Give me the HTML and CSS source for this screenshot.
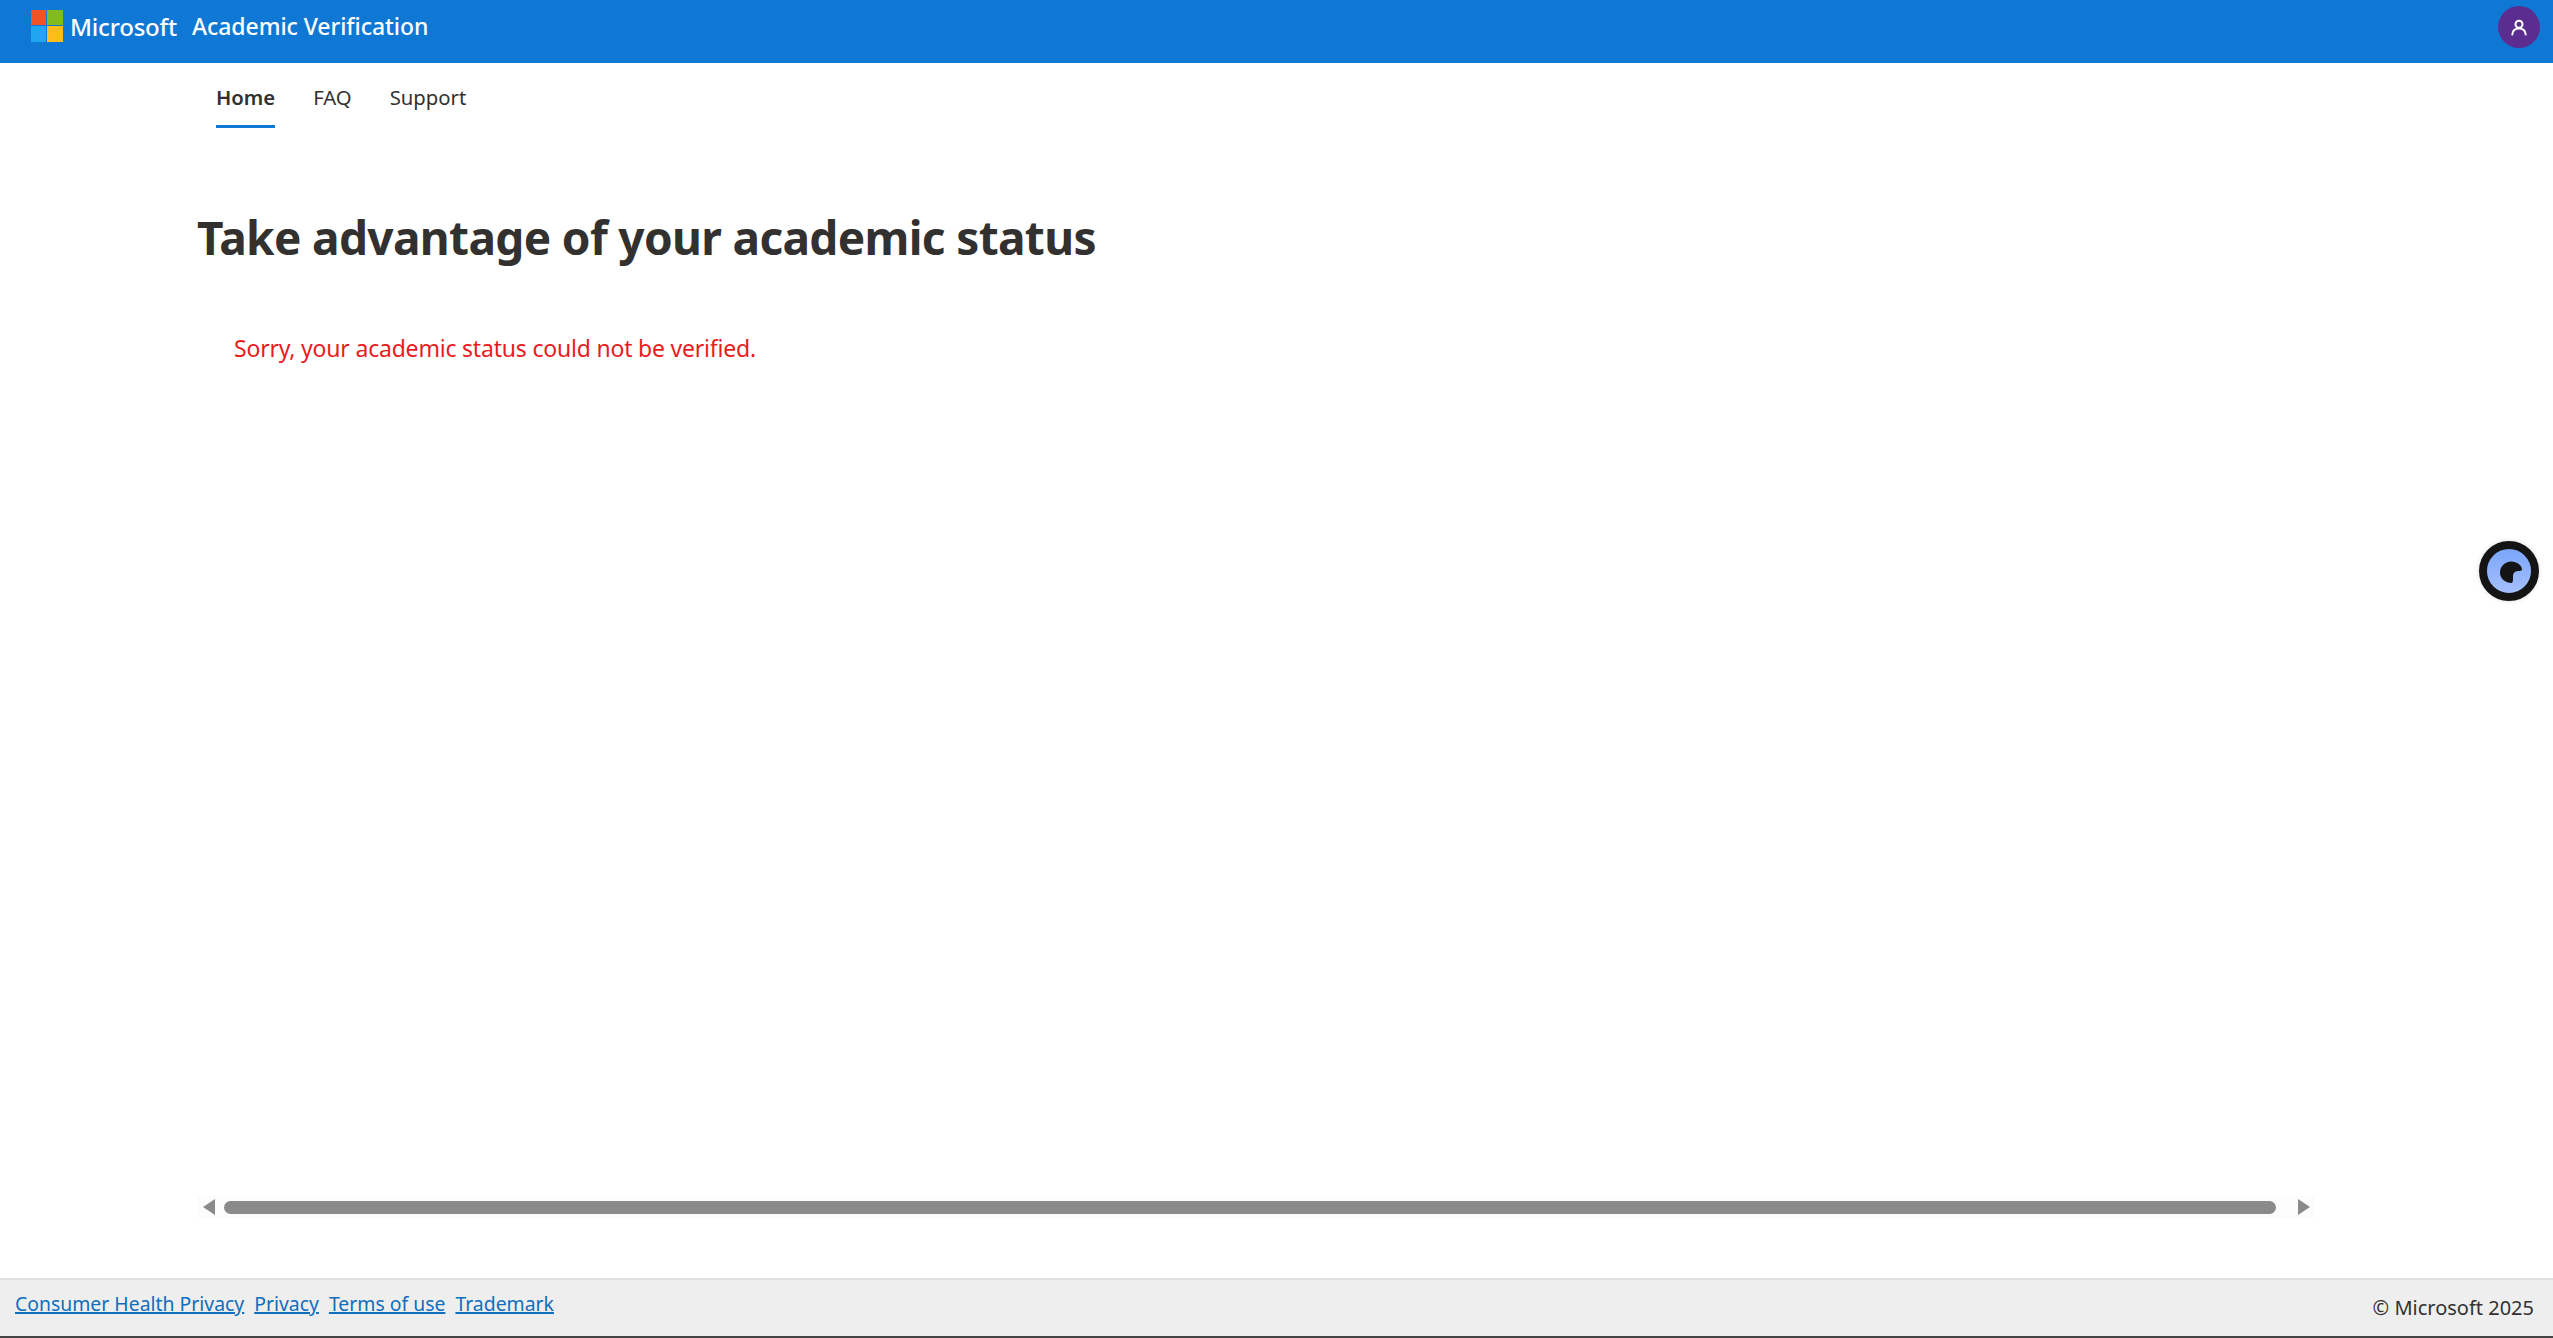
FILE: index.html
```html
<!DOCTYPE html>
<html lang="en-US">
  <head>
    <meta charset="UTF-8" />
    <title>Academic Verification</title>
    <link rel="stylesheet" href="styles.css">
  </head>
  <body>
    <header class="topbar">
      <svg class="ms-logo" viewBox="0 0 32 32" width="32" height="32">
        <rect x="0" y="0" width="15" height="15" fill="#f25325" />
        <rect x="16" y="0" width="16" height="15" fill="#81bb1e" />
        <rect x="0" y="16" width="15" height="16" fill="#20a5f0" />
        <rect x="16" y="16" width="16" height="16" fill="#ffba1c" />
      </svg>
      <span class="brand">Microsoft</span>
      <span class="app-name">Academic Verification</span>
      <span class="avatar">
        <svg viewBox="0 0 16 16" width="16" height="17" fill="none" stroke="#fff" stroke-width="2">
          <circle cx="8" cy="4.800" r="3.500" />
          <path d="M1.300 15c.3-3.600 2.900-6 6.700-6s6.400 2.400 6.700 6" stroke-linecap="round" />
        </svg>
      </span>
    </header>

    <nav class="tabs">
      <a class="tab active" href="#">Home</a>
      <a class="tab" href="#">FAQ</a>
      <a class="tab" href="#">Support</a>
    </nav>

    <main class="content">
      <h1 class="title">Take advantage of your academic status</h1>
      <p class="error">Sorry, your academic status could not be verified.</p>

      <div class="hscroll">
        <span class="arrow arrow-left"></span>
        <span class="thumb"></span>
        <span class="arrow arrow-right"></span>
      </div>
    </main>

    <footer class="footer">
      <div class="footer-links">
        <a href="#">Consumer Health Privacy</a>
        <a href="#">Privacy</a>
        <a href="#">Terms of use</a>
        <a href="#">Trademark</a>
      </div>
      <span class="copyright">© Microsoft 2025</span>
    </footer>

    <div class="float-widget">
      <svg viewBox="0 0 36 36" width="36" height="36">
        <path d="M20 8.500C26 8.500 31 12.500 31 16.500C31 18 29 18 27 18C23.500 18.500 22 20 22 24C22 26.500 22 29 21 30C14 30 9 25.500 9 19.500C9 13.500 14 8.500 20 8.500Z" fill="#141414" />
      </svg>
    </div>
  </body>
</html>
```

FILE: styles.css
```css
html, body {
  height: 100%;
}

body {
  display: flex;
  flex-direction: column;
  height: 100vh;
  margin: 0;
  overflow: hidden;
  font-family: "Noto Sans", "Open Sans", Arial, sans-serif;
  background-color: #fff;
  color: #323130;
}

.topbar {
  display: flex;
  align-items: center;
  flex: 0 0 63px;
  padding: 0 13px 0 31px;
  box-sizing: border-box;
  background: #0f78d4;
  color: #fff;
}

.ms-logo {
  margin-right: 7px;
  margin-top: -11px;
}

.brand {
  font-size: 24px;
  font-weight: 500;
  letter-spacing: -0.2px;
  margin-top: -10px;
}

.app-name {
  margin-left: 15px;
  margin-top: -12px;
  font-size: 23px;
  font-weight: 500;
  letter-spacing: -0.05px;
}

.avatar {
  display: flex;
  align-items: center;
  justify-content: center;
  width: 42px;
  height: 42px;
  margin-left: auto;
  margin-top: -9px;
  border-radius: 50%;
  background: #5c2d91;
}

.tabs {
  display: flex;
  gap: 38px;
  height: 66px;
  padding-left: 216px;
  box-sizing: border-box;
}

.tab {
  height: 65px;
  padding-top: 20px;
  box-sizing: border-box;
  font-size: 20.300px;
  line-height: 28px;
  color: #323130;
  text-decoration: none;
}

.tab.active {
  font-weight: 600;
  border-bottom: 3px solid #0f78d4;
}

.content {
  display: flex;
  flex-direction: column;
  flex: 1;
  padding: 0 238px 0 197px;
}

.title {
  margin: 76px 0 0;
  font-size: 46px;
  line-height: 64px;
  font-weight: 700;
  letter-spacing: -0.66px;
  color: #323130;
}

.error {
  margin: 63px 0 0 37px;
  font-size: 23px;
  line-height: 32px;
  letter-spacing: -0.2px;
  color: #e81c1c;
}

.hscroll {
  display: flex;
  align-items: center;
  justify-content: space-between;
  height: 22px;
  margin-top: auto;
  margin-bottom: 60px;
  padding: 0 5px 0 6px;
  background: #fcfcfc;
}

.thumb {
  flex: 1;
  height: 13px;
  margin: 0 22px 0 9px;
  border-radius: 7px;
  background: #8a8a8a;
}

.arrow {
  width: 0;
  height: 0;
  border-top: 8px solid transparent;
  border-bottom: 8px solid transparent;
}

.arrow-left {
  border-right: 12px solid #8a8a8a;
}

.arrow-right {
  border-left: 12px solid #8a8a8a;
}

.footer {
  display: flex;
  justify-content: space-between;
  flex: 0 0 60px;
  padding: 10px 19px 0 15px;
  box-sizing: border-box;
  border-top: 2px solid #e1e1e1;
  border-bottom: 2px solid #444;
  background: #eee;
  font-size: 20px;
  line-height: 28px;
}

.footer-links {
  display: flex;
  gap: 10px;
  font-size: 19.400px;
}

.footer-links a {
  color: #106ebe;
  text-decoration-thickness: 2px;
}

.copyright {
  margin-top: 4px;
  color: #323130;
}

.float-widget {
  position: absolute;
  top: 541px;
  right: 14px;
  display: flex;
  align-items: center;
  justify-content: center;
  width: 44px;
  height: 44px;
  border: 8px solid #141414;
  border-radius: 50%;
  background: linear-gradient(#7aa5fb, #a5c0fd);
  box-shadow: 0 0 4px rgba(0, 0, 0, 0.15);
}
```
